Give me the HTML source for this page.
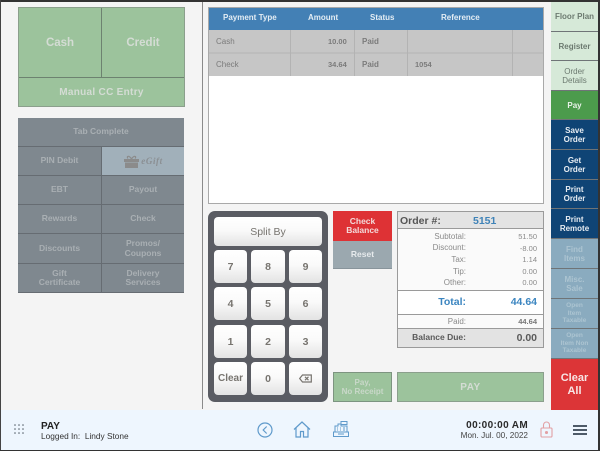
<!DOCTYPE html>
<html><head><meta charset="utf-8">
<style>
*{box-sizing:border-box;margin:0;padding:0}
html,body{width:600px;height:451px;overflow:hidden;background:#f4f4f4;font-family:"Liberation Sans",sans-serif}
#w{position:absolute;left:0;top:0;width:600px;height:451px;overflow:hidden;background:#f4f4f4;filter:blur(.35px)}
.a{position:absolute}
.c{position:absolute;display:flex;align-items:center;justify-content:center;text-align:center;font-weight:bold}
.g{background:#9cc39c;color:#d4dcd4;border:1px solid #7d9480}
.d{background:#7f888f;color:#a9afb3;font-size:8.5px;line-height:9.5px;border-right:1px solid #666c72;border-bottom:1px solid #666c72}
.k{position:absolute;background:linear-gradient(#fff 0%,#fafafa 45%,#e3e3e3 100%);border-radius:4px;display:flex;align-items:center;justify-content:center;color:#77746f;font-size:10.5px;font-weight:bold}
.r{position:absolute;left:551px;width:47px;display:flex;align-items:center;justify-content:center;text-align:center;font-weight:bold;border-bottom:1px solid #6f7477}
.lt{background:#d6e9d8;color:#6c7a70;font-size:8px;line-height:9px}
.nv{background:#0f4475;color:#e8edf2;font-size:8px;line-height:9px}
.bl{background:#8aabbf;color:#acc4d1;font-size:8px;line-height:9px}
.bs{background:#8aabbf;color:#acc4d1;font-size:6.5px;line-height:7.5px;font-weight:bold}
.t{position:absolute;font-size:8px;font-weight:bold;color:#7b7b7b;line-height:10px}
.n{position:absolute;font-size:7.5px;font-weight:bold;color:#7b7b7b;line-height:10px}
.h{position:absolute;top:13px;font-size:8px;font-weight:bold;color:#e4edf4;line-height:10px}
.l{position:absolute;right:134px;font-size:8px;color:#8a8a8a;line-height:10px;text-align:right}
.v{position:absolute;right:63px;font-size:7.5px;color:#8a8a8a;line-height:10px;text-align:right}
.vl{position:absolute;width:1px;background:#b3b3b3;top:30px;height:46px}
</style></head><body><div id="w">
<div class="a" style="left:0;top:0;width:600px;height:2px;background:#333"></div>
<div class="a" style="left:0;top:0;width:1px;height:451px;background:#444"></div>
<div class="a" style="right:0;top:0;width:2px;height:451px;background:#333"></div>
<div class="a" style="left:202px;top:2px;width:1px;height:407px;background:#8a8a8a"></div>

<div class="a" style="left:18px;top:7px;width:167px;height:100px;background:#9cc39c;border:1px solid #8b9f8c"></div>
<div class="c" style="left:19px;top:8px;width:82px;height:69px;color:#d4dcd4;font-size:11.5px">Cash</div>
<div class="a" style="left:101px;top:8px;width:1px;height:69px;background:#6d8270"></div>
<div class="c" style="left:102px;top:8px;width:82px;height:69px;color:#d4dcd4;font-size:11.5px">Credit</div>
<div class="a" style="left:19px;top:77px;width:165px;height:1px;background:#6d8270"></div>
<div class="c" style="left:19px;top:78px;width:165px;height:28px;color:#d4dcd4;font-size:10px;letter-spacing:.3px">Manual CC Entry</div>

<div class="a" style="left:18px;top:118px;width:166px;height:175px;background:#7f888f"></div>
<div class="c d" style="left:18px;top:118px;width:166px;height:29px;border-right:0">Tab Complete</div>
<div class="c d" style="left:18px;top:147px;width:84px;height:29px">PIN Debit</div>
<div class="c" style="left:102px;top:147px;width:82px;height:29px;background:#a1b0ba;border-bottom:1px solid #666c72">
<svg width="17" height="13" viewBox="0 0 17 13" style="margin-right:1px"><path d="M1 4h15v3H1zM2 7.5h13V13H2z" fill="#8b8b8b"/><path d="M8.5 4C6 0 3 1 5 3.5M8.5 4C11 0 14 1 12 3.5" fill="none" stroke="#8b8b8b" stroke-width="1.2"/></svg><span style="font:italic bold 9px 'Liberation Serif',serif;color:#8b8f93;letter-spacing:.6px">eGift</span></div>
<div class="c d" style="left:18px;top:176px;width:84px;height:29px">EBT</div>
<div class="c d" style="left:102px;top:176px;width:82px;height:29px;border-right:0">Payout</div>
<div class="c d" style="left:18px;top:205px;width:84px;height:29px">Rewards</div>
<div class="c d" style="left:102px;top:205px;width:82px;height:29px;border-right:0">Check</div>
<div class="c d" style="left:18px;top:234px;width:84px;height:30px">Discounts</div>
<div class="c d" style="left:102px;top:234px;width:82px;height:30px;border-right:0">Promos/<br>Coupons</div>
<div class="c d" style="left:18px;top:264px;width:84px;height:29px">Gift<br>Certificate</div>
<div class="c d" style="left:102px;top:264px;width:82px;height:29px;border-right:0">Delivery<br>Services</div>

<div class="a" style="left:208px;top:7px;width:336px;height:197px;background:#fff;border:1px solid #a9a9a9"></div>
<div class="a" style="left:209px;top:8px;width:334px;height:22px;background:#4380b5"></div>
<div class="h" style="left:223px">Payment Type</div>
<div class="h" style="left:308px">Amount</div>
<div class="h" style="left:370px">Status</div>
<div class="h" style="left:441px">Reference</div>
<div class="a" style="left:209px;top:30px;width:334px;height:46px;background:#c6c6c6"></div>
<div class="a" style="left:209px;top:52px;width:334px;height:2px;background:#bdbdbd"></div>
<div class="vl" style="left:290px"></div><div class="vl" style="left:354px"></div><div class="vl" style="left:407px"></div><div class="vl" style="left:512px"></div>
<div class="t" style="left:216px;top:37px;font-weight:normal">Cash</div>
<div class="n" style="left:328px;top:37px">10.00</div>
<div class="t" style="left:362px;top:37px">Paid</div>
<div class="t" style="left:216px;top:60px;font-weight:normal">Check</div>
<div class="n" style="left:328px;top:60px">34.64</div>
<div class="t" style="left:362px;top:60px">Paid</div>
<div class="n" style="left:415px;top:60px">1054</div>

<div class="a" style="left:208px;top:211px;width:120px;height:191px;background:#5a5c63;border-radius:7px"></div>
<div class="k" style="left:214px;top:217px;width:108px;height:29px;font-weight:normal;font-size:10.5px">Split By</div>
<div class="k" style="left:214px;top:250px;width:33px;height:33px">7</div>
<div class="k" style="left:251px;top:250px;width:34px;height:33px">8</div>
<div class="k" style="left:289px;top:250px;width:33px;height:33px">9</div>
<div class="k" style="left:214px;top:287px;width:33px;height:33px">4</div>
<div class="k" style="left:251px;top:287px;width:34px;height:33px">5</div>
<div class="k" style="left:289px;top:287px;width:33px;height:33px">6</div>
<div class="k" style="left:214px;top:325px;width:33px;height:33px">1</div>
<div class="k" style="left:251px;top:325px;width:34px;height:33px">2</div>
<div class="k" style="left:289px;top:325px;width:33px;height:33px">3</div>
<div class="k" style="left:214px;top:362px;width:33px;height:33px;font-size:10px">Clear</div>
<div class="k" style="left:251px;top:362px;width:34px;height:33px">0</div>
<div class="k" style="left:289px;top:362px;width:33px;height:33px"><svg width="13" height="9" viewBox="0 0 13 9"><path d="M3.5 1H12.3V8H3.500L.7 4.500Z" fill="none" stroke="#77746f" stroke-width="1.200"/><path d="M6 2.800 9.500 6.200M9.500 2.800 6 6.200" stroke="#77746f" stroke-width="1.200"/></svg></div>

<div class="c" style="left:333px;top:211px;width:59px;height:30px;background:#de3235;color:#f3dada;font-size:8.5px;line-height:9px">Check<br>Balance</div>
<div class="c" style="left:333px;top:241px;width:59px;height:28px;background:#9ba8af;color:#e6eaec;font-size:8.5px;border-bottom:1px solid #88949b;padding-bottom:2px">Reset</div>
<div class="c g" style="left:333px;top:372px;width:59px;height:30px;font-size:8px;line-height:9px;color:#c9d8c9">Pay,<br>No Receipt</div>
<div class="c g" style="left:397px;top:372px;width:147px;height:30px;font-size:10px;letter-spacing:.5px;border-color:#8b9f8c">PAY</div>

<div class="a" style="left:397px;top:211px;width:147px;height:137px;background:#fafafa;border:1px solid #9a9a9a"></div>
<div class="a" style="left:398px;top:212px;width:145px;height:17px;background:#e3e3e3;border-bottom:1px solid #9a9a9a"></div>
<div class="a" style="left:400px;top:215px;font-size:10.5px;font-weight:bold;color:#555;line-height:12px">Order #:</div>
<div class="a" style="left:473px;top:215px;font-size:10.5px;font-weight:bold;color:#3f83b8;line-height:12px">5151</div>
<div class="l" style="top:232px">Subtotal:</div><div class="v" style="top:232px">51.50</div>
<div class="l" style="top:243px">Discount:</div><div class="v" style="top:244px">-8.00</div>
<div class="l" style="top:255px">Tax:</div><div class="v" style="top:255px">1.14</div>
<div class="l" style="top:267px">Tip:</div><div class="v" style="top:267px">0.00</div>
<div class="l" style="top:278px">Other:</div><div class="v" style="top:278px">0.00</div>
<div class="a" style="left:398px;top:290px;width:145px;height:1px;background:#9a9a9a"></div>
<div class="a" style="left:398px;top:291px;width:145px;height:23px;background:#fff"></div>
<div class="a" style="left:398px;top:314px;width:145px;height:1px;background:#9a9a9a"></div>
<div class="a" style="right:134px;top:296px;font-size:10.5px;font-weight:bold;color:#3b85c0;line-height:13px">Total:</div>
<div class="a" style="right:63px;top:296px;font-size:10.5px;font-weight:bold;color:#3b85c0;line-height:13px">44.64</div>
<div class="l" style="top:317px">Paid:</div><div class="v" style="top:317px;font-weight:bold;color:#777">44.64</div>
<div class="a" style="left:398px;top:328px;width:145px;height:19px;background:#e3e3e3;border-top:1px solid #9a9a9a"></div>
<div class="a" style="right:134px;top:332px;font-size:8.5px;font-weight:bold;color:#5a5a5a;line-height:11px">Balance Due:</div>
<div class="a" style="right:63px;top:332px;font-size:10.5px;font-weight:bold;color:#5a5a5a;line-height:12px">0.00</div>

<div class="r lt" style="top:2px;height:30px">Floor Plan</div>
<div class="r lt" style="top:32px;height:29px">Register</div>
<div class="r lt" style="top:61px;height:30px;font-weight:normal">Order<br>Details</div>
<div class="r" style="top:91px;height:29px;background:#4c9b4c;color:#e8f2e8;font-size:8px">Pay</div>
<div class="r nv" style="top:120px;height:30px">Save<br>Order</div>
<div class="r nv" style="top:150px;height:30px">Get<br>Order</div>
<div class="r nv" style="top:180px;height:29px">Print<br>Order</div>
<div class="r nv" style="top:209px;height:30px">Print<br>Remote</div>
<div class="r bl" style="top:239px;height:30px">Find<br>Items</div>
<div class="r bl" style="top:269px;height:30px">Misc.<br>Sale</div>
<div class="r bs" style="top:299px;height:30px">Open<br>Item<br>Taxable</div>
<div class="r bs" style="top:329px;height:30px">Open<br>Item Non<br>Taxable</div>
<div class="r" style="top:359px;height:51px;background:#dc3537;color:#f7e6e6;font-size:11px;line-height:13px;border:0">Clear<br>All</div>

<div class="a" style="left:1px;top:410px;width:597px;height:40px;background:#eef6fe"></div>
<div class="a" style="left:0;top:450px;width:600px;height:1px;background:#333"></div>
<svg class="a" style="left:14px;top:424px" width="11" height="11" viewBox="0 0 11 11" fill="#55606a"><circle cx="1" cy="1" r=".8"/><circle cx="5" cy="1" r=".8"/><circle cx="9" cy="1" r=".8"/><circle cx="1" cy="5" r=".8"/><circle cx="5" cy="5" r=".8"/><circle cx="9" cy="5" r=".8"/><circle cx="1" cy="9" r=".8"/><circle cx="5" cy="9" r=".8"/><circle cx="9" cy="9" r=".8"/></svg>
<div class="a" style="left:41px;top:421px;font-size:10px;font-weight:bold;color:#222;line-height:11px">PAY</div>
<div class="a" style="left:41px;top:431px;font-size:8.3px;color:#333;line-height:10px;white-space:pre">Logged In:  Lindy Stone</div>

<svg class="a" style="left:257px;top:422px" width="16" height="16" viewBox="0 0 16 16" fill="none" stroke="#5f9acb" stroke-width="1.2"><circle cx="8" cy="8" r="7"/><path d="M9.700 4.500 6.200 8l3.500 3.500"/></svg>
<svg class="a" style="left:293px;top:421px" width="18" height="17" viewBox="0 0 18 17" fill="none" stroke="#5f9acb" stroke-width="1.2"><path d="M1 8.500 9 1l8 7.500M3 7v9h4.500v-5.500h3V16H15V7"/></svg>
<svg class="a" style="left:333px;top:421px" width="16" height="17" viewBox="0 0 16 17" fill="none" stroke="#5f9acb" stroke-width="1"><rect x="8" y=".5" width="6" height="3"/><path d="M2 11V5h3V3h3v2h6v6M.5 11h15v4.500H.5zM5 13h6"/><path d="M4 7h1M7 7h1M10 7h2M4 9h1M7 9h1M10 9h2"/></svg>

<div class="a" style="right:72px;top:420px;font-size:10px;font-weight:bold;color:#2a2a2a;line-height:12px;letter-spacing:.35px">00:00:00 AM</div>
<div class="a" style="right:72px;top:431px;font-size:8.2px;color:#444;line-height:10px">Mon. Jul. 00, 2022</div>
<svg class="a" style="left:540px;top:421px" width="13" height="17" viewBox="0 0 13 17" fill="none" stroke="#e2a0a4" stroke-width="1.1"><rect x="1" y="7" width="11" height="9" rx="1"/><path d="M3.500 7V4a3 3 0 0 1 6 0v3"/><circle cx="6.500" cy="11.500" r="1" fill="#e2a0a4"/></svg>
<div class="a" style="left:573px;top:425px;width:14px;height:2px;background:#4d5a68"></div>
<div class="a" style="left:573px;top:429px;width:14px;height:2px;background:#4d5a68"></div>
<div class="a" style="left:573px;top:433px;width:14px;height:2px;background:#4d5a68"></div>
</div></body></html>
